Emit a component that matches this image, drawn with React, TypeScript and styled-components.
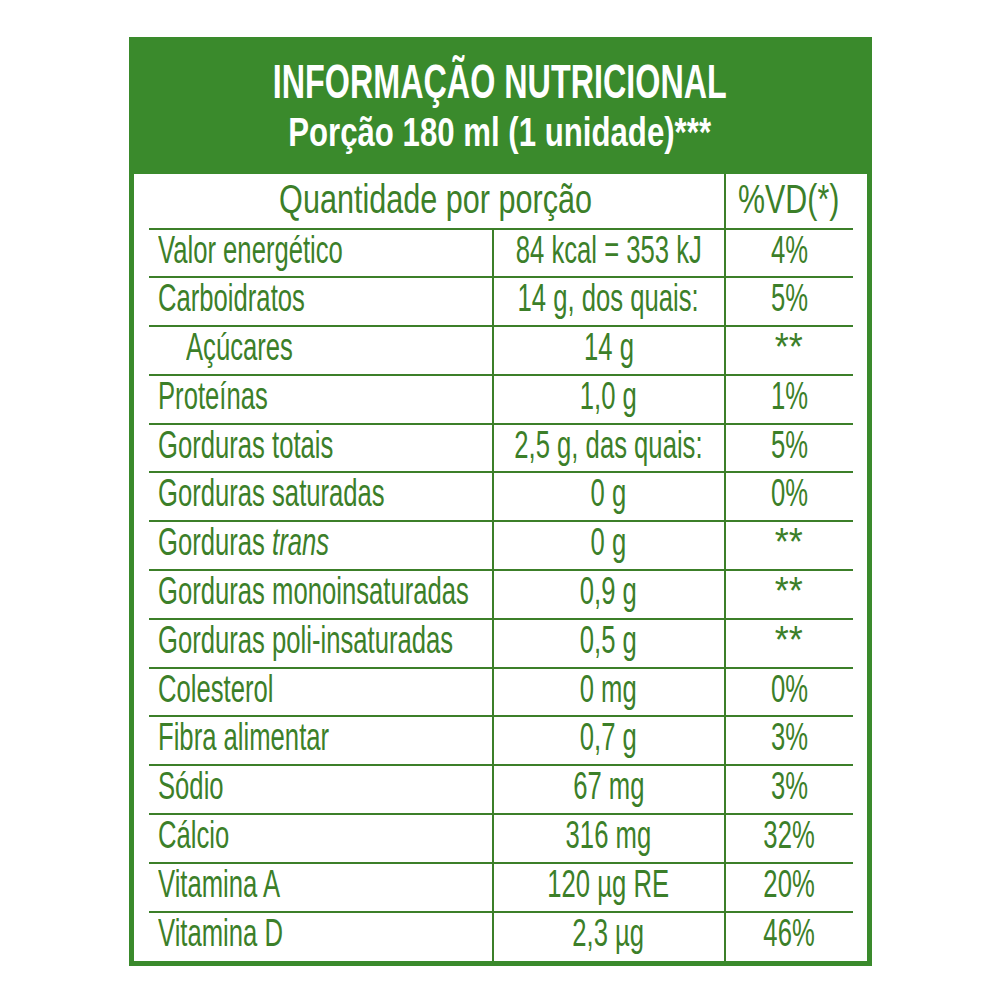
import React from 'react';
import styled, { createGlobalStyle } from 'styled-components';

const GREEN = '#3a8a2c';
const INK = '#3c7f29';

const GlobalStyle = createGlobalStyle`
  html, body {
    margin: 0;
    padding: 0;
    background: #ffffff;
  }
  body {
    font-family: "Liberation Sans", Arial, sans-serif;
  }
`;

const Page = styled.div`
  width: 1000px;
  height: 1000px;
  padding-top: 37px;
  box-sizing: border-box;
`;

const Label = styled.div`
  width: 743px;
  margin: 0 auto;
  box-sizing: border-box;
  border: 5px solid ${GREEN};
  background: #ffffff;
`;

const Header = styled.div`
  background: ${GREEN};
  color: #ffffff;
  display: flex;
  flex-direction: column;
  align-items: center;
  padding: 16px 0 21px;
`;

const Title = styled.div`
  font-weight: 700;
  font-size: 47.5px;
  line-height: 48px;
  display: flex;
  justify-content: center;
  width: 100%;
`;

const Subtitle = styled.div`
  font-weight: 700;
  font-size: 40.5px;
  line-height: 40.5px;
  margin-top: 6px;
  display: flex;
  justify-content: center;
  width: 100%;
`;

const Squeeze = styled.span<{ $sx: number; $origin?: string }>`
  display: inline-block;
  flex-shrink: 0;
  white-space: nowrap;
  transform: scaleX(${({ $sx }) => $sx});
  transform-origin: ${({ $origin }) => $origin || 'center'};
`;

const Body = styled.div`
  display: grid;
  grid-template-columns: 343px 232px 129px;
  padding: 0 14px 0 15px;
  color: ${INK};
`;

const HeadCell = styled.div<{ $span?: number; $divider?: boolean }>`
  grid-column: span ${({ $span }) => $span || 1};
  height: 56px;
  box-sizing: border-box;
  border-bottom: 2px solid ${INK};
  border-left: ${({ $divider }) => ($divider ? `2px solid ${INK}` : 'none')};
  display: flex;
  justify-content: center;
  padding-top: 5px;
  font-size: 40px;
  line-height: 40px;
`;

const Cell = styled.div<{ $align: 'left' | 'center'; $divider?: boolean; $last?: boolean; $indent?: number }>`
  height: 48.8px;
  box-sizing: border-box;
  border-bottom: ${({ $last }) => ($last ? 'none' : `2px solid ${INK}`)};
  border-left: ${({ $divider }) => ($divider ? `2px solid ${INK}` : 'none')};
  display: flex;
  justify-content: ${({ $align }) => ($align === 'left' ? 'flex-start' : 'center')};
  padding-top: 1px;
  padding-left: ${({ $align, $indent }) => ($align === 'left' ? 9 + ($indent || 0) : 0)}px;
  font-size: 38px;
  line-height: 38px;
  overflow: visible;
`;

const Trans = styled.i`
  font-style: italic;
`;

type Row = { name: React.ReactNode; amount: string; vd: string; indent?: number };

const rows: Row[] = [
  { name: 'Valor energético', amount: '84 kcal = 353 kJ', vd: '4%' },
  { name: 'Carboidratos', amount: '14 g, dos quais:', vd: '5%' },
  { name: 'Açúcares', amount: '14 g', vd: '**', indent: 28 },
  { name: 'Proteínas', amount: '1,0 g', vd: '1%' },
  { name: 'Gorduras totais', amount: '2,5 g, das quais:', vd: '5%' },
  { name: 'Gorduras saturadas', amount: '0 g', vd: '0%' },
  { name: <>Gorduras <Trans>trans</Trans></>, amount: '0 g', vd: '**' },
  { name: 'Gorduras monoinsaturadas', amount: '0,9 g', vd: '**' },
  { name: 'Gorduras poli-insaturadas', amount: '0,5 g', vd: '**' },
  { name: 'Colesterol', amount: '0 mg', vd: '0%' },
  { name: 'Fibra alimentar', amount: '0,7 g', vd: '3%' },
  { name: 'Sódio', amount: '67 mg', vd: '3%' },
  { name: 'Cálcio', amount: '316 mg', vd: '32%' },
  { name: 'Vitamina A', amount: '120 µg RE', vd: '20%' },
  { name: 'Vitamina D', amount: '2,3 µg', vd: '46%' },
];

const SX = 0.675;

export default function App() {
  return (
    <Page>
      <GlobalStyle />
      <Label>
        <Header>
          <Title>
            <Squeeze $sx={0.68}>INFORMAÇÃO NUTRICIONAL</Squeeze>
          </Title>
          <Subtitle>
            <Squeeze $sx={0.77}>Porção 180 ml (1 unidade)***</Squeeze>
          </Subtitle>
        </Header>
        <Body>
          <HeadCell $span={2}>
            <Squeeze $sx={0.765}>Quantidade por porção</Squeeze>
          </HeadCell>
          <HeadCell $divider>
            <Squeeze $sx={0.76}>%VD(*)</Squeeze>
          </HeadCell>
          {rows.map((row, i) => {
            const last = i === rows.length - 1;
            return (
              <React.Fragment key={i}>
                <Cell $align="left" $last={last} $indent={row.indent}>
                  <Squeeze $sx={SX} $origin="left">{row.name}</Squeeze>
                </Cell>
                <Cell $align="center" $divider $last={last}>
                  <Squeeze $sx={SX}>{row.amount}</Squeeze>
                </Cell>
                <Cell $align="center" $divider $last={last}>
                  <Squeeze $sx={row.vd === '**' ? 0.95 : SX}>{row.vd}</Squeeze>
                </Cell>
              </React.Fragment>
            );
          })}
        </Body>
      </Label>
    </Page>
  );
}
